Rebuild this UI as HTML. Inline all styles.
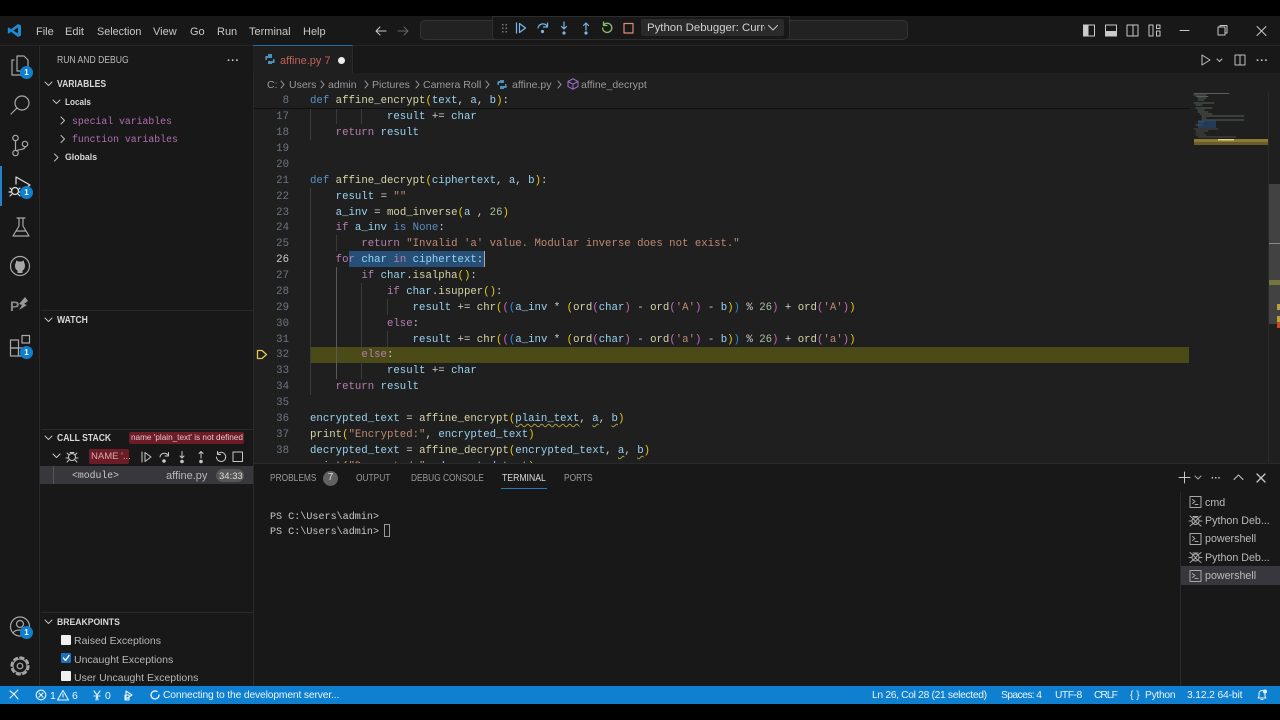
<!DOCTYPE html>
<html><head><meta charset="utf-8"><title>affine.py</title>
<style>
*{box-sizing:border-box;margin:0;padding:0}
html,body{width:1280px;height:720px;overflow:hidden;background:#000}
body{position:relative;font-family:"Liberation Sans",sans-serif;font-size:11px;color:#c8c8c8}
.r{position:absolute}
.t{position:absolute;white-space:nowrap;line-height:14px;margin-top:1px}
.c{position:absolute;left:310px;white-space:pre;font:10.7px/16px "Liberation Mono",monospace;color:#bcd;height:16px;margin-top:1px}
.n{position:absolute;left:253px;width:36px;text-align:right;font:10.7px/16px "Liberation Mono",monospace;color:#6e7681;margin-top:1px}
.g{position:absolute;width:1px;background:#3a3a3a}
svg{position:absolute;overflow:visible;fill:none;stroke-linecap:round;stroke-linejoin:round}
.k{color:#5a90c4}.p{color:#b67fb0}.f{color:#d5d5a8}.v{color:#99d3f0}.s{color:#bf8a72}.w{color:#cfcfcf}
.y{color:#e8c810}.m{color:#c868c4}.b{color:#2a90dc}.d{color:#a8c09c}.u{text-decoration:underline wavy #a8a040 1px;text-underline-offset:2px}
.h{font-weight:bold;color:#d8d8d8;font-size:10px;transform:scaleX(.86);transform-origin:left}
.pt{font-size:10.200px;color:#9a9a9a;transform:scaleX(.82);transform-origin:left}
.sb{font-size:10.300px;color:#eaf4fc}
.mono{font-family:"Liberation Mono",monospace}
.badge{position:absolute;width:13px;height:13px;border-radius:50%;background:#0f7fcf;color:#fff;font-size:8px;font-weight:bold;text-align:center;line-height:13px}
</style></head><body>

<!-- Base regions -->
<div class="r" style="left:0;top:16px;width:1280px;height:30px;background:#181818"></div>
<div class="r" style="left:0;top:45px;width:1280px;height:1px;background:#262626"></div>
<div class="r" style="left:0;top:46px;width:40px;height:640px;background:#181818;border-right:1px solid #2a2a2a"></div>
<div class="r" style="left:40px;top:46px;width:214px;height:640px;background:#181818;border-right:1px solid #2a2a2a"></div>
<div class="r" style="left:254px;top:46px;width:1026px;height:27px;background:#181818"></div>
<div class="r" style="left:254px;top:73px;width:1026px;height:390px;background:#1f1f1f"></div>
<div class="r" style="left:0;top:686px;width:1280px;height:18px;background:#0f80d0"></div>

<!-- Title bar -->
<svg style="left:7px;top:23px" width="15" height="15" viewBox="0 0 15 15"><path d="M11 1 L14 2.500 V12.500 L11 14 L4 8.800 L1.800 10.600 L.8 10 V5 L1.800 4.400 L4 6.200Z" fill="#1f8ad2"/><path d="M11 4.500 L6.500 7.500 L11 10.500Z" fill="#181818"/></svg>
<div class="t" style="left:36px;top:24px;font-size:11px">File</div>
<div class="t" style="left:65px;top:24px;font-size:11px">Edit</div>
<div class="t" style="left:97px;top:24px;font-size:10.800px">Selection</div>
<div class="t" style="left:153px;top:24px;font-size:11px">View</div>
<div class="t" style="left:190px;top:24px;font-size:11px">Go</div>
<div class="t" style="left:217px;top:24px;font-size:11px">Run</div>
<div class="t" style="left:249px;top:24px;font-size:11px">Terminal</div>
<div class="t" style="left:303px;top:24px;font-size:11px">Help</div>
<svg style="left:375px;top:25px" width="40" height="12" stroke="#c8c8c8"><path d="M1 6H11M1 6L5 2M1 6L5 10"/><path stroke="#666" d="M23 6H33M33 6L29 2M33 6L29 10"/></svg>
<div class="r" style="left:420px;top:20px;width:488px;height:20px;background:#222;border:1px solid #333;border-radius:5px"></div>

<!-- Debug toolbar -->
<div class="r" style="left:492px;top:16px;width:298px;height:24px;background:#181818;border:1px solid #2e2e2e;border-radius:0 0 4px 4px"></div>
<svg style="left:500px;top:20px" width="140" height="16" fill="none">
 <g fill="#777"><rect x="2" y="4" width="1.500" height="1.500"/><rect x="5.500" y="4" width="1.500" height="1.500"/><rect x="2" y="7.500" width="1.500" height="1.500"/><rect x="5.500" y="7.500" width="1.500" height="1.500"/><rect x="2" y="11" width="1.500" height="1.500"/><rect x="5.500" y="11" width="1.500" height="1.500"/></g>
 <g stroke="#78b4e8" stroke-width="1.200"><path d="M16.500 3V13M19.500 3.500L25.500 8L19.500 12.500Z"/><path d="M38 8A5 5 0 0 1 47 6M47.500 3V7H43.500"/><path d="M64 2V9M61.500 6.500L64 9L66.500 6.500"/><path d="M86 10V3M83.500 5.500L86 3L88.500 5.500"/></g>
 <g fill="#78b4e8"><circle cx="42.500" cy="11.500" r="1.600"/><circle cx="64" cy="13" r="1.600"/><circle cx="86" cy="13" r="1.600"/></g>
 <path d="M104 4.500A4.600 4.600 0 1 1 102.600 8M103.500 2V5.500H107" stroke="#86c06c" stroke-width="1.300"/>
 <rect x="124" y="3.500" width="9" height="9.500" stroke="#e08a78" stroke-width="1.200"/>
</svg>
<div class="r" style="left:641px;top:19px;width:143px;height:17px;background:#2a2a2a;border-radius:2px"></div>
<div class="t" style="left:647px;top:20px;font-size:11.400px;width:118px;overflow:hidden;color:#d0d0d0">Python Debugger: Current File</div>
<svg style="left:767px;top:24px" width="12" height="8" stroke="#c8c8c8"><path d="M1.500 1.500L6 6L10.500 1.500"/></svg>

<!-- Layout icons & window controls -->
<svg style="left:1083px;top:24px" width="190" height="14" stroke="#c8c8c8">
 <rect x=".5" y="1" width="11" height="11" stroke="#ccc"/><rect x=".5" y="1" width="4.500" height="11" fill="#ccc"/>
 <rect x="22.500" y="1" width="11" height="11"/><rect x="22.500" y="7.500" width="11" height="4.500" fill="#ccc"/>
 <rect x="44" y="1" width="11" height="11"/><path d="M50 1V12"/>
 <rect x="66" y="1" width="4" height="11"/><rect x="73.500" y="1" width="3.500" height="3.500"/><rect x="73.500" y="7" width="3.500" height="5"/>
 <path d="M97 6.500H106"/>
 <rect x="135" y="3" width="7" height="8"/><path d="M137 3V1.500H144V9H142"/>
 <path d="M174 2.500L183 11.500M183 2.500L174 11.500"/>
</svg>

<!-- Activity bar -->
<div class="r" style="left:0;top:166px;width:2px;height:40px;background:#1f84d0"></div>
<svg style="left:8px;top:54px" width="24" height="300" stroke="#a8a8a8" stroke-width="1.200">
 <path d="M9 2H16L20 6V17H9ZM6 6H4V21H15V19"/>
 <circle cx="14" cy="49" r="7"/><path d="M9 54L3 60"/>
 <circle cx="7.500" cy="84" r="2.700"/><circle cx="7.500" cy="99" r="2.700"/><circle cx="17" cy="90" r="2.700"/><path d="M7.500 86.700V96.300M17 92.700C17 96 11 95 8.500 96.800"/>
 <path d="M8 123L22 131L17 134M8 123V130" stroke="#ddd"/>
 <circle cx="7" cy="137" r="3.500" stroke="#ddd"/><path d="M2 134L4 136M12 134L10 136M1 138H3M11 138H13M2 142L4 140M12 142L10 140" stroke="#ddd"/>
 <path d="M9 164H17M11 164V172L5 182H21L15 172V164M8 177H18"/>
 <circle cx="12" cy="212" r="9.500"/><path d="M9.500 219V216.500C6.500 215.500 6.500 210 8 208.500L8 206.500L10.500 207.500H13.500L16 206.500L16 208.500C17.500 210 17.500 215.500 14.500 216.500V219" fill="#a8a8a8" stroke="none"/>
</svg>
<div class="t" style="left:10px;top:298px;font-size:14px;font-weight:bold;color:#888">P</div>
<svg style="left:16px;top:296px" width="16" height="18"><path d="M9 1L12 5L8 8L11 9L3 14L6 9L3 8Z" fill="#999"/></svg>
<svg style="left:9px;top:336px" width="24" height="24" stroke="#a8a8a8" stroke-width="1.200"><rect x="1.500" y="4" width="8" height="8"/><rect x="1.500" y="12" width="8" height="8"/><rect x="9.500" y="12" width="8" height="8"/><rect x="13" y="-.5" width="7.500" height="7.500"/></svg>
<svg style="left:9px;top:616px" width="22" height="62" stroke="#a8a8a8" stroke-width="1.200">
 <circle cx="11" cy="10.500" r="9.500"/><circle cx="11" cy="8" r="3.500"/><path d="M4 17C6 13 16 13 18 17"/>
 <circle cx="11" cy="50" r="2.800"/><circle cx="11" cy="50" r="7"/><circle cx="11" cy="50" r="8.600" stroke-dasharray="3.500 3.250" stroke-width="2"/>
</svg>
<div class="badge" style="left:20px;top:66px">1</div>
<div class="badge" style="left:20px;top:186px">1</div>
<div class="badge" style="left:20px;top:346px">1</div>
<div class="badge" style="left:20px;top:626px">1</div>

<!-- Sidebar -->
<div class="t" style="left:57px;top:53px;font-size:10px;color:#bbb;transform:scaleX(.86);transform-origin:left">RUN AND DEBUG</div>
<div class="t" style="left:227px;top:53px;font-size:11px;font-weight:bold;letter-spacing:.5px">···</div>
<svg style="left:44px;top:79px" width="30" height="90" stroke="#c0c0c0">
 <path d="M1 3L4.500 6.500L8 3"/><path d="M9 21L12.500 24.500L16 21"/><path d="M17 38L20.500 41.500L17 45"/><path d="M17 56.500L20.500 60L17 63.500"/><path d="M10.500 75L14 78.500L10.500 82"/>
</svg>
<div class="t h" style="left:57px;top:77px">VARIABLES</div>
<div class="t h" style="left:65px;top:95px;font-size:9.500px">Locals</div>
<div class="t mono" style="left:72px;top:114px;font-size:9.800px;color:#b070b0">special variables</div>
<div class="t mono" style="left:72px;top:132px;font-size:9.800px;color:#b070b0">function variables</div>
<div class="t h" style="left:65px;top:150px;font-size:9.500px;transform:scaleX(.92)">Globals</div>

<div class="r" style="left:41px;top:310px;width:212px;height:1px;background:#2a2a2a"></div>
<svg style="left:44px;top:317px" width="10" height="8" stroke="#c0c0c0"><path d="M1 1L4.500 4.500L8 1"/></svg>
<div class="t h" style="left:57px;top:313px">WATCH</div>

<div class="r" style="left:41px;top:429px;width:212px;height:1px;background:#2a2a2a"></div>
<svg style="left:44px;top:435px" width="10" height="8" stroke="#c0c0c0"><path d="M1 1L4.500 4.500L8 1"/></svg>
<div class="t h" style="left:57px;top:431px">CALL STACK</div>
<div class="r" style="left:129px;top:432px;width:115px;height:12px;background:#6c1c26;border-radius:2px"></div>
<div class="t" style="left:131px;top:430px;font-size:8.200px;color:#e0c8c8">name 'plain_text' is not defined</div>
<svg style="left:52px;top:450px" width="190" height="14" stroke="#c8c8c8">
 <path d="M1 4L4.500 7.500L8 4"/>
 <circle cx="20" cy="7" r="3.500"/><path d="M15 3L17 5M25 3L23 5M14 8H16.500M24 8H26M15 12L17 10M25 12L23 10M18 2.500H22" />
 <path d="M90 2V12M93 2.500L99 7L93 11.500Z"/>
 <path d="M108 7A4.500 4.500 0 0 1 116 5M116.500 2.500V6H113"/><circle cx="112" cy="11" r="1.300" fill="#c8c8c8"/>
 <path d="M130 1.500V8M128 6L130 8L132 6"/><circle cx="130" cy="11.500" r="1.300" fill="#c8c8c8"/>
 <path d="M149 8V1.500M147 3.500L149 1.500L151 3.500"/><circle cx="149" cy="11.500" r="1.300" fill="#c8c8c8"/>
 <path d="M166 3.500A4.600 4.600 0 1 1 164.500 7M165.500 1.500V4.500H168.500"/>
 <rect x="181" y="2" width="9.500" height="9.500"/>
</svg>
<div class="r" style="left:89px;top:449px;width:40px;height:15px;background:#6c1c26;border-radius:2px"></div>
<div class="t" style="left:91px;top:449px;font-size:9.500px;color:#d8a8a8">NAME '...</div>
<div class="r" style="left:40px;top:466px;width:213px;height:18px;background:#37373d"></div>
<div class="r" style="left:53px;top:466px;width:1px;height:18px;background:#555"></div>
<div class="t mono" style="left:72px;top:468px;font-size:9.800px;color:#c8c8c8">&lt;module&gt;</div>
<div class="t" style="left:166px;top:468px;font-size:11px;color:#b8b8b8">affine.py</div>
<div class="r" style="left:216px;top:469px;width:28px;height:13px;background:#555;border-radius:7px"></div>
<div class="t" style="left:219px;top:468.500px;font-size:9.500px;color:#ddd">34:33</div>

<div class="r" style="left:41px;top:612px;width:212px;height:1px;background:#2a2a2a"></div>
<svg style="left:44px;top:619px" width="10" height="8" stroke="#c0c0c0"><path d="M1 1L4.500 4.500L8 1"/></svg>
<div class="t h" style="left:57px;top:615px;font-size:9.600px;transform:scaleX(.9)">BREAKPOINTS</div>
<div class="r" style="left:61px;top:635px;width:10px;height:10px;background:#f0f0f0;border-radius:1px"></div>
<div class="r" style="left:61px;top:653px;width:10px;height:10px;background:#1a6fc0;border-radius:1px"></div>
<svg style="left:61px;top:653px" width="10" height="10" stroke="#fff" stroke-width="1.400"><path d="M2.500 5L4.500 7.500L8 2.500"/></svg>
<div class="r" style="left:61px;top:671px;width:10px;height:10px;background:#f0f0f0;border-radius:1px"></div>
<div class="t" style="left:74px;top:633px;font-size:10.500px;color:#b8b8b8">Raised Exceptions</div>
<div class="t" style="left:74px;top:652px;font-size:10.500px;color:#b8b8b8">Uncaught Exceptions</div>
<div class="t" style="left:74px;top:670px;font-size:10.500px;color:#b8b8b8">User Uncaught Exceptions</div>

<!-- Tabs -->
<div class="r" style="left:253px;top:45px;width:100px;height:28px;background:#1f1f1f;border-top:1px solid #1c6ea4;border-right:1px solid #2a2a2a"></div>
<svg style="left:265px;top:54px" width="10" height="11"><path d="M3 0H7V4H2V6H1C0 6 0 2 1 2H3Z" fill="#4a90b8"/><path d="M7 10H3V7H8V5H9C10 5 10 9 9 9H7Z" fill="#4a90b8"/></svg>
<div class="t" style="left:280px;top:53px;font-size:11px;color:#c06058">affine.py 7</div>
<div class="r" style="left:338px;top:57px;width:7px;height:7px;border-radius:50%;background:#eee"></div>
<svg style="left:1200px;top:54px" width="70" height="12" stroke="#c0c0c0">
 <path d="M2 1L10 6L2 11Z"/><path d="M17 5L19.500 7.500L22 5"/>
 <rect x="35" y="1" width="10" height="10"/><path d="M40 1V11"/>
</svg>
<div class="t" style="left:1256px;top:53px;font-size:11px;font-weight:bold;letter-spacing:.5px">···</div>

<!-- Breadcrumbs -->
<div class="t" style="left:267px;top:77px;font-size:10.500px;color:#9a9a9a">C:</div>
<div class="t" style="left:289px;top:77px;font-size:10.500px;color:#9a9a9a">Users</div>
<div class="t" style="left:328px;top:77px;font-size:10.500px;color:#9a9a9a">admin</div>
<div class="t" style="left:372px;top:77px;font-size:10.500px;color:#9a9a9a">Pictures</div>
<div class="t" style="left:423px;top:77px;font-size:10.500px;color:#9a9a9a">Camera Roll</div>
<svg style="left:280px;top:80px" width="300" height="10" stroke="#909090">
 <path d="M1 1L4 4.500L1 8M41 1L44 4.500L41 8M85 1L88 4.500L85 8M136 1L139 4.500L136 8M206 1L209 4.500L206 8M278 1L281 4.500L278 8"/>
</svg>
<svg style="left:497px;top:80px" width="10" height="10"><path d="M3 0H7V3H2V5H1C0 5 0 2 1 1H3Z" fill="#4a90b8"/><path d="M7 9H3V6H8V4H9C10 5 10 8 9 8H7Z" fill="#4a90b8"/></svg>
<div class="t" style="left:512px;top:77px;font-size:10.500px;color:#9a9a9a">affine.py</div>
<svg style="left:567px;top:78px" width="12" height="12" stroke="#a070c8"><path d="M6 .8L11 3.500V8.500L6 11.200L1 8.500V3.500ZM1 3.500L6 6.200L11 3.500M6 6.200V11.200"/></svg>
<div class="t" style="left:581px;top:77px;font-size:10.500px;color:#9a9a9a">affine_decrypt</div>

<!-- Editor decorations -->
<div class="r" style="left:310px;top:347px;width:879px;height:15.500px;background:#4b4b17"></div>
<div class="r" style="left:349px;top:251px;width:135px;height:16px;background:#264f78"></div>
<div class="g" style="left:484px;top:251px;height:16px;background:#aaa"></div>
<div class="g" style="left:310px;top:108px;height:32px"></div>
<div class="g" style="left:336px;top:108px;height:16px"></div>
<div class="g" style="left:361px;top:108px;height:16px"></div>
<div class="g" style="left:310px;top:188px;height:207px"></div>
<div class="g" style="left:336px;top:235px;height:16px"></div>
<div class="g" style="left:336px;top:267px;height:112px;background:#5a5a5a"></div>
<div class="g" style="left:361px;top:283px;height:64px"></div>
<div class="g" style="left:361px;top:362px;height:17px"></div>
<div class="g" style="left:387px;top:299px;height:16px"></div>
<div class="g" style="left:387px;top:331px;height:16px"></div>
<svg style="left:256px;top:349px" width="12" height="12" stroke="#e8c850" stroke-width="1.300"><path d="M1.500 1.500H6L10.500 5.500L6 9.500H1.500Z"/></svg>

<!-- Code -->
<div class="n" style="top:108px">17</div><div class="c" style="top:108px">            <span class="v">result</span> <span class="w">+=</span> <span class="v">char</span></div>
<div class="n" style="top:124px">18</div><div class="c" style="top:124px">    <span class="p">return</span> <span class="v">result</span></div>
<div class="n" style="top:140px">19</div>
<div class="n" style="top:156px">20</div>
<div class="n" style="top:172px">21</div><div class="c" style="top:172px"><span class="k">def</span> <span class="f">affine_decrypt</span><span class="y">(</span><span class="v">ciphertext</span><span class="w">,</span> <span class="v">a</span><span class="w">,</span> <span class="v">b</span><span class="y">)</span><span class="w">:</span></div>
<div class="n" style="top:188px">22</div><div class="c" style="top:188px">    <span class="v">result</span> <span class="w">=</span> <span class="s">""</span></div>
<div class="n" style="top:204px">23</div><div class="c" style="top:204px">    <span class="v">a_inv</span> <span class="w">=</span> <span class="f">mod_inverse</span><span class="y">(</span><span class="v">a</span> <span class="w">,</span> <span class="d">26</span><span class="y">)</span></div>
<div class="n" style="top:219px">24</div><div class="c" style="top:219px">    <span class="p">if</span> <span class="v">a_inv</span> <span class="k">is</span> <span class="k">None</span><span class="w">:</span></div>
<div class="n" style="top:235px">25</div><div class="c" style="top:235px">        <span class="p">return</span> <span class="s">"Invalid 'a' value. Modular inverse does not exist."</span></div>
<div class="n" style="top:251px;color:#ccc">26</div><div class="c" style="top:251px">    <span class="p">for</span> <span class="v">char</span> <span class="p">in</span> <span class="v">ciphertext</span><span class="w">:</span></div>
<div class="n" style="top:267px">27</div><div class="c" style="top:267px">        <span class="p">if</span> <span class="v">char</span><span class="w">.</span><span class="f">isalpha</span><span class="y">()</span><span class="w">:</span></div>
<div class="n" style="top:283px">28</div><div class="c" style="top:283px">            <span class="p">if</span> <span class="v">char</span><span class="w">.</span><span class="f">isupper</span><span class="y">()</span><span class="w">:</span></div>
<div class="n" style="top:299px">29</div><div class="c" style="top:299px">                <span class="v">result</span> <span class="w">+=</span> <span class="f">chr</span><span class="y">(</span><span class="m">(</span><span class="b">(</span><span class="v">a_inv</span> <span class="w">*</span> <span class="y">(</span><span class="f">ord</span><span class="m">(</span><span class="v">char</span><span class="m">)</span> <span class="w">-</span> <span class="f">ord</span><span class="m">(</span><span class="s">'A'</span><span class="m">)</span> <span class="w">-</span> <span class="v">b</span><span class="y">)</span><span class="b">)</span> <span class="w">%</span> <span class="d">26</span><span class="m">)</span> <span class="w">+</span> <span class="f">ord</span><span class="m">(</span><span class="s">'A'</span><span class="m">)</span><span class="y">)</span></div>
<div class="n" style="top:315px">30</div><div class="c" style="top:315px">            <span class="p">else</span><span class="w">:</span></div>
<div class="n" style="top:331px">31</div><div class="c" style="top:331px">                <span class="v">result</span> <span class="w">+=</span> <span class="f">chr</span><span class="y">(</span><span class="m">(</span><span class="b">(</span><span class="v">a_inv</span> <span class="w">*</span> <span class="y">(</span><span class="f">ord</span><span class="m">(</span><span class="v">char</span><span class="m">)</span> <span class="w">-</span> <span class="f">ord</span><span class="m">(</span><span class="s">'a'</span><span class="m">)</span> <span class="w">-</span> <span class="v">b</span><span class="y">)</span><span class="b">)</span> <span class="w">%</span> <span class="d">26</span><span class="m">)</span> <span class="w">+</span> <span class="f">ord</span><span class="m">(</span><span class="s">'a'</span><span class="m">)</span><span class="y">)</span></div>
<div class="n" style="top:346px">32</div><div class="c" style="top:346px">        <span class="p">else</span><span class="w">:</span></div>
<div class="n" style="top:362px">33</div><div class="c" style="top:362px">            <span class="v">result</span> <span class="w">+=</span> <span class="v">char</span></div>
<div class="n" style="top:378px">34</div><div class="c" style="top:378px">    <span class="p">return</span> <span class="v">result</span></div>
<div class="n" style="top:394px">35</div>
<div class="n" style="top:410px">36</div><div class="c" style="top:410px"><span class="v">encrypted_text</span> <span class="w">=</span> <span class="f">affine_encrypt</span><span class="y">(</span><span class="v u">plain_text</span><span class="w">,</span> <span class="v u">a</span><span class="w">,</span> <span class="v u">b</span><span class="y">)</span></div>
<div class="n" style="top:426px">37</div><div class="c" style="top:426px"><span class="f">print</span><span class="y">(</span><span class="s">"Encrypted:"</span><span class="w">,</span> <span class="v">encrypted_text</span><span class="y">)</span></div>
<div class="n" style="top:442px">38</div><div class="c" style="top:442px"><span class="v">decrypted_text</span> <span class="w">=</span> <span class="f">affine_decrypt</span><span class="y">(</span><span class="v">encrypted_text</span><span class="w">,</span> <span class="v u">a</span><span class="w">,</span> <span class="v u">b</span><span class="y">)</span></div>
<div class="c" style="top:458px"><span class="f">print</span><span class="y">(</span><span class="s">"Decrypted:"</span><span class="w">,</span> <span class="v">decrypted_text</span><span class="y">)</span></div>

<!-- Sticky line -->
<div class="r" style="left:254px;top:92px;width:936px;height:17px;background:#1f1f1f;border-bottom:1px solid #111"></div>
<div class="n" style="top:92px">8</div><div class="c" style="top:92px"><span class="k">def</span> <span class="f">affine_encrypt</span><span class="y">(</span><span class="v">text</span><span class="w">,</span> <span class="v">a</span><span class="w">,</span> <span class="v">b</span><span class="y">)</span><span class="w">:</span></div>

<!-- Minimap & scrollbar -->
<svg style="left:1194px;top:92px" width="75" height="56">
 <g stroke-width=".8" stroke="#8a9a8a">
 <path d="M0 1.500H35M0 3H12M2 4.500H14M4 6H12M4 8H10M0 11H20M2 13H8M2 16H18M4 18H10M4 20H14M6 22H18M8 24H50M8 26H12M8 28H50M4 30H10M2 33H8" opacity=".7"/>
 <path d="M0 37H24M2 39H14M2 41H10M2 43H12M4 45H42" opacity=".5"/>
 </g>
 <rect x="4" y="28" width="18" height="8" fill="#264f78" opacity=".6"/>
 <rect x="0" y="47" width="74" height="3" fill="#8a7a32"/>
 <rect x="0" y="50" width="74" height="3" fill="#6a5a2c"/>
 <rect x="24" y="47" width="16" height="1.500" fill="#ddd080"/>
</svg>
<div class="r" style="left:1268px;top:92px;width:1px;height:370px;background:#2a2a2a"></div>
<div class="r" style="left:1269px;top:184px;width:11px;height:140px;background:#424242"></div>
<div class="r" style="left:1269px;top:243px;width:11px;height:1px;background:#888"></div>
<div class="r" style="left:1269px;top:280px;width:11px;height:5px;background:#74743c"></div>
<div class="r" style="left:1277px;top:304px;width:3px;height:6px;background:#b8a040"></div>
<div class="r" style="left:1277px;top:316px;width:3px;height:6px;background:#b8a040"></div>
<div class="r" style="left:1277px;top:322px;width:3px;height:6px;background:#c84a20"></div>

<!-- Panel -->
<div class="r" style="left:254px;top:463px;width:1026px;height:223px;background:#181818;border-top:1px solid #2a2a2a"></div>
<div class="t pt" style="left:270px;top:471px">PROBLEMS</div>
<div class="r" style="left:323px;top:471px;width:15px;height:15px;border-radius:50%;background:#616161"></div>
<div class="t" style="left:323px;top:470px;width:15px;text-align:center;font-size:10px;color:#ddd">7</div>
<div class="t pt" style="left:356px;top:471px">OUTPUT</div>
<div class="t pt" style="left:411px;top:471px">DEBUG CONSOLE</div>
<div class="t pt" style="left:502px;top:471px;color:#d8d8d8;transform:scaleX(.85)">TERMINAL</div>
<div class="t pt" style="left:564px;top:471px">PORTS</div>
<div class="r" style="left:501px;top:488px;width:46px;height:1px;background:#2b7cb4"></div>
<div class="t mono" style="left:270px;top:510px;font-size:10.100px;color:#c8c8c8">PS C:\Users\admin&gt;</div>
<div class="t mono" style="left:270px;top:525px;font-size:10.100px;color:#c8c8c8">PS C:\Users\admin&gt;</div>
<div class="r" style="left:384px;top:524px;width:6px;height:13px;border:1px solid #999"></div>

<svg style="left:1178px;top:471px" width="90" height="14" stroke="#c8c8c8">
 <path d="M6.500 1V12M1 6.500H12"/><path d="M17 5L20 8L23 5" stroke="#aaa"/>
 <path d="M56 8.500L60.500 4L65 8.500"/><path d="M79 3L87 11M87 3L79 11" stroke-width="1.300"/>
</svg>
<div class="t" style="left:1211px;top:471px;font-size:10px;font-weight:bold;color:#c8c8c8">···</div>
<div class="r" style="left:1180px;top:492px;width:1px;height:194px;background:#2a2a2a"></div>
<div class="r" style="left:1181px;top:566px;width:99px;height:19px;background:#37373d"></div>
<svg style="left:1189px;top:495px" width="14" height="90" stroke="#a8a8a8">
 <rect x="1" y="1.500" width="11" height="11"/><path d="M3.500 4.500L6 6.500L3.500 8.500M6 9.500H9"/>
 <g transform="translate(0,19)"><circle cx="6.500" cy="7" r="3.500"/><path d="M1 2L4 4.500M12 2L9 4.500M0 7H3M10 7H13M1 12L4 9.500M12 12L9 9.500M4 2.500H9M4.500 5L8.500 9.500M8.500 5L4.500 9.500"/></g>
 <g transform="translate(0,37)"><rect x="1" y="1.500" width="11" height="11"/><path d="M3.500 4.500L6 6.500L3.500 8.500M6 9.500H9"/></g>
 <g transform="translate(0,55.500)"><circle cx="6.500" cy="7" r="3.500"/><path d="M1 2L4 4.500M12 2L9 4.500M0 7H3M10 7H13M1 12L4 9.500M12 12L9 9.500M4 2.500H9M4.500 5L8.500 9.500M8.500 5L4.500 9.500"/></g>
 <g transform="translate(0,74)"><rect x="1" y="1.500" width="11" height="11"/><path d="M3.500 4.500L6 6.500L3.500 8.500M6 9.500H9"/></g>
</svg>
<div class="t" style="left:1205px;top:495px;font-size:10.700px;color:#bbb">cmd</div>
<div class="t" style="left:1205px;top:513px;font-size:10.700px;color:#bbb">Python Deb...</div>
<div class="t" style="left:1205px;top:531px;font-size:10.700px;color:#bbb">powershell</div>
<div class="t" style="left:1205px;top:550px;font-size:10.700px;color:#bbb">Python Deb...</div>
<div class="t" style="left:1205px;top:568px;font-size:10.700px;color:#bbb">powershell</div>

<!-- Status bar -->
<svg style="left:9px;top:689px" width="140" height="13" stroke="#e8f2fa" stroke-width="1.100">
 <path d="M1 9L5 5L1 2M9 1L5 5L9 10"/>
 <circle cx="32" cy="6" r="4.800"/><path d="M30 4L34 8M34 4L30 8"/>
 <path d="M54 1.500L59.500 11H48.500ZM54 5V8"/>
 <path d="M85 2L88 6L87 11M91 2L88 6L89 11M85 7H91"/>
 <path d="M117 2L123 6L117 10ZM116 6H120V11H116Z"/>
</svg>
<div class="t" style="left:50px;top:688px;font-size:10.500px;color:#eaf4fc">1</div>
<div class="t" style="left:72px;top:688px;font-size:10.500px;color:#eaf4fc">6</div>
<div class="t" style="left:105px;top:688px;font-size:10.500px;color:#eaf4fc">0</div>
<svg style="left:149px;top:689px" width="12" height="12" stroke="#eaf4fc" stroke-width="1.300"><path d="M10 6A4 4 0 1 1 8 2.500M2 6A4 4 0 0 0 4 9.500"/></svg>
<div class="t sb" style="left:163px;top:688px;letter-spacing:-.15px">Connecting to the development server...</div>
<div class="t sb" style="left:872px;top:688px;letter-spacing:-.33px">Ln 26, Col 28 (21 selected)</div>
<div class="t sb" style="left:1001px;top:688px;letter-spacing:-.6px">Spaces: 4</div>
<div class="t sb" style="left:1055px;top:688px;letter-spacing:-.5px">UTF-8</div>
<div class="t sb" style="left:1094px;top:688px;letter-spacing:-1px">CRLF</div>
<div class="t sb" style="left:1130px;top:688px">{ }</div>
<div class="t sb" style="left:1145px;top:688px;letter-spacing:-.3px">Python</div>
<div class="t sb" style="left:1187px;top:688px;letter-spacing:-.15px">3.12.2 64-bit</div>
<svg style="left:1256px;top:689px" width="12" height="12" stroke="#eaf4fc"><path d="M2 9H10L9 7.500V4.500A3 3 0 0 0 3 4.500V7.500ZM5 10.500H7"/><circle cx="9" cy="2.500" r="1.500" fill="#eaf4fc"/></svg>

</body></html>
